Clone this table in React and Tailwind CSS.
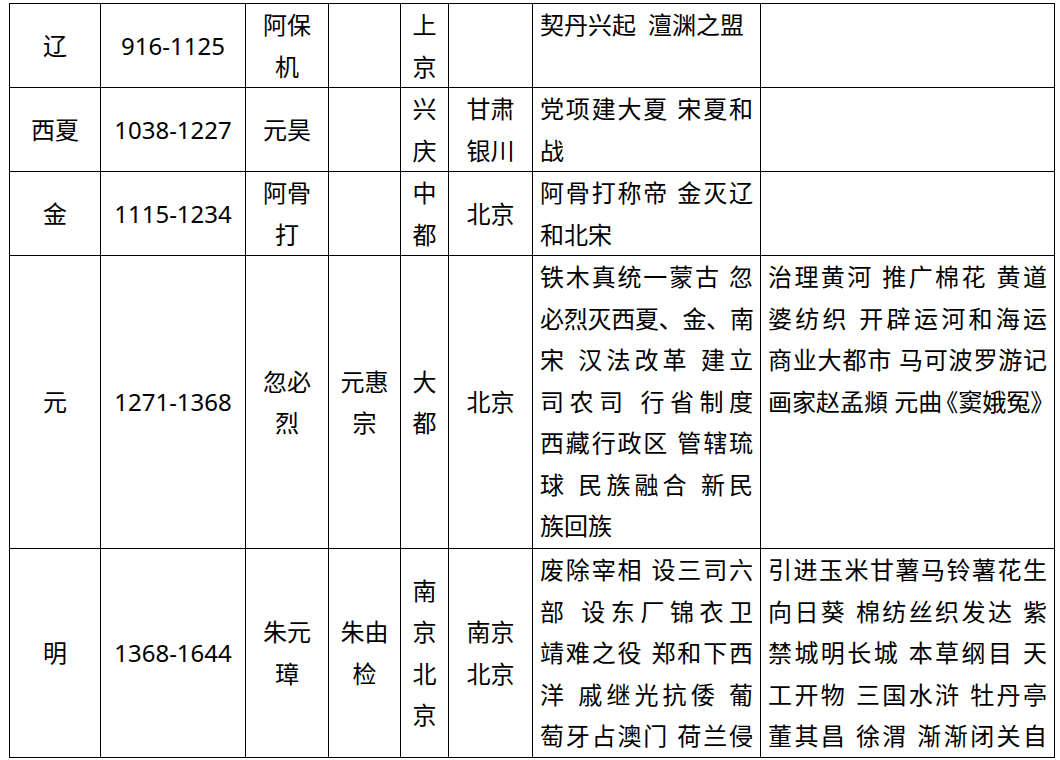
const J = "text-justify [text-align-last:justify]";

const rows = [
  {
    h: "h-[84px]",
    dynasty: "辽",
    years: "916-1125",
    founder: "阿保机",
    last: "",
    capital: "上京",
    now: "",
    events: [{ t: "契丹兴起\u2002澶渊之盟", c: "whitespace-nowrap" }],
    culture: [],
  },
  {
    h: "h-[84px]",
    dynasty: "西夏",
    years: "1038-1227",
    founder: "元昊",
    last: "",
    capital: "兴庆",
    now: "甘肃银川",
    events: [{ t: "党项建大夏 宋夏和", j: true }, { t: "战" }],
    culture: [],
  },
  {
    h: "h-[83px]",
    dynasty: "金",
    years: "1115-1234",
    founder: "阿骨打",
    last: "",
    capital: "中都",
    now: "北京",
    events: [{ t: "阿骨打称帝 金灭辽", j: true }, { t: "和北宋" }],
    culture: [],
  },
  {
    h: "h-[293px]",
    dynasty: "元",
    years: "1271-1368",
    founder: "忽必烈",
    last: "元惠宗",
    capital: "大都",
    now: "北京",
    events: [
      { t: "铁木真统一蒙古 忽", j: true },
      { t: "必烈灭西夏、金、南", j: true, c: "tracking-[-1px]" },
      { t: "宋 汉法改革 建立", j: true },
      { t: "司农司 行省制度", j: true },
      { t: "西藏行政区 管辖琉", j: true },
      { t: "球 民族融合 新民", j: true },
      { t: "族回族" },
    ],
    culture: [
      { t: "治理黄河 推广棉花 黄道", j: true },
      { t: "婆纺织 开辟运河和海运", j: true },
      { t: "商业大都市 马可波罗游记", j: true },
      {
        c: "whitespace-nowrap",
        t: (
          <>
            画家赵孟頫 元曲<span className="-ml-[8px]">《</span>窦娥冤<span className="-mr-[8px]">》</span>
          </>
        ),
      },
    ],
  },
  {
    h: "h-[207px]",
    dynasty: "明",
    years: "1368-1644",
    founder: "朱元璋",
    last: "朱由检",
    capital: "南京北京",
    now: "南京北京",
    events: [
      { t: "废除宰相 设三司六", j: true },
      { t: "部 设东厂锦衣卫", j: true },
      { t: "靖难之役 郑和下西", j: true },
      { t: "洋 戚继光抗倭 葡", j: true },
      { t: "萄牙占澳门 荷兰侵", j: true },
    ],
    culture: [
      { t: "引进玉米甘薯马铃薯花生", j: true },
      { t: "向日葵 棉纺丝织发达 紫", j: true },
      { t: "禁城明长城 本草纲目 天", j: true },
      { t: "工开物 三国水浒 牡丹亭", j: true },
      { t: "董其昌 徐渭 渐渐闭关自", j: true },
    ],
  },
];

const cell = "border border-black px-[7px] py-0 align-middle text-center";

const Lines = ({ lines }) =>
  lines.map((l, i) => (
    <div key={i} className={`${l.j ? J : "text-left"} ${l.c || ""}`}>
      {l.t}
    </div>
  ));

export default function App() {
  return (
    <div className="w-[1060px] h-[760px] bg-white overflow-hidden pt-[3px] pl-[9px] font-['Noto_Sans','Noto_Sans_CJK_SC',sans-serif] text-[24px] leading-[41.5px] text-black">
      <table className="table-fixed border-collapse w-[1045px]">
        <colgroup>
          <col className="w-[91px]" />
          <col className="w-[145px]" />
          <col className="w-[83px]" />
          <col className="w-[72px]" />
          <col className="w-[48px]" />
          <col className="w-[84px]" />
          <col className="w-[228px]" />
          <col className="w-[294px]" />
        </colgroup>
        <tbody>
          {rows.map((r) => (
            <tr key={r.dynasty} className={r.h}>
              <td className={cell}>{r.dynasty}</td>
              <td className={cell}>{r.years}</td>
              <td className={cell}>{r.founder}</td>
              <td className={cell}>{r.last}</td>
              <td className={cell}>{r.capital}</td>
              <td className={cell}>{r.now}</td>
              <td className="border border-black px-[7px] py-0 align-top">
                <Lines lines={r.events} />
              </td>
              <td className="border border-black px-[7px] py-0 align-top">
                <Lines lines={r.culture} />
              </td>
            </tr>
          ))}
        </tbody>
      </table>
    </div>
  );
}
